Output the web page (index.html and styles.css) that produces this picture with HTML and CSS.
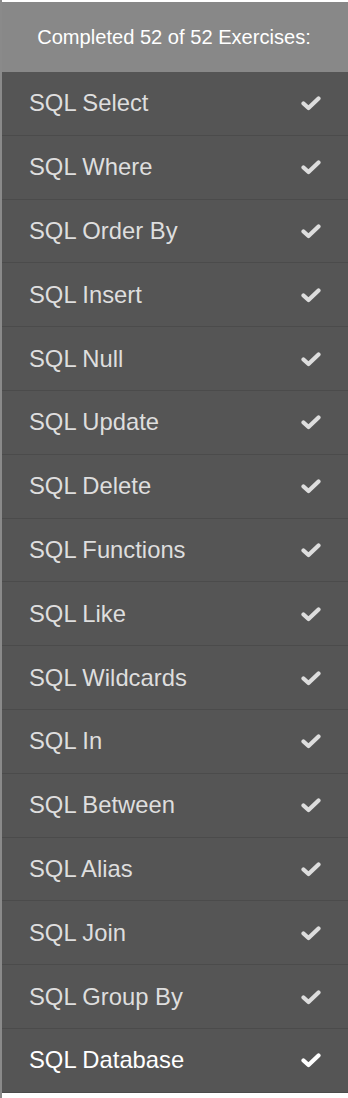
FILE: index.html
```html
<!DOCTYPE html>
<html>
<head>
<meta charset="utf-8">
<link rel="stylesheet" href="styles.css">
</head>
<body>
<div class="panel">
  <div class="header">Completed 52 of 52 Exercises:</div>
  <ul class="list">
    <li class="item"><span>SQL Select</span><svg class="check" viewBox="0 0 20 16"><path d="M2.5 8.5 L7.5 13 L17.5 3.5" /></svg></li>
    <li class="item"><span>SQL Where</span><svg class="check" viewBox="0 0 20 16"><path d="M2.5 8.5 L7.5 13 L17.5 3.5" /></svg></li>
    <li class="item"><span>SQL Order By</span><svg class="check" viewBox="0 0 20 16"><path d="M2.5 8.5 L7.5 13 L17.5 3.5" /></svg></li>
    <li class="item"><span>SQL Insert</span><svg class="check" viewBox="0 0 20 16"><path d="M2.5 8.5 L7.5 13 L17.5 3.5" /></svg></li>
    <li class="item"><span>SQL Null</span><svg class="check" viewBox="0 0 20 16"><path d="M2.5 8.5 L7.5 13 L17.5 3.5" /></svg></li>
    <li class="item"><span>SQL Update</span><svg class="check" viewBox="0 0 20 16"><path d="M2.5 8.5 L7.5 13 L17.5 3.5" /></svg></li>
    <li class="item"><span>SQL Delete</span><svg class="check" viewBox="0 0 20 16"><path d="M2.5 8.5 L7.5 13 L17.5 3.5" /></svg></li>
    <li class="item"><span>SQL Functions</span><svg class="check" viewBox="0 0 20 16"><path d="M2.5 8.5 L7.5 13 L17.5 3.5" /></svg></li>
    <li class="item"><span>SQL Like</span><svg class="check" viewBox="0 0 20 16"><path d="M2.5 8.5 L7.5 13 L17.5 3.5" /></svg></li>
    <li class="item"><span>SQL Wildcards</span><svg class="check" viewBox="0 0 20 16"><path d="M2.5 8.5 L7.5 13 L17.5 3.5" /></svg></li>
    <li class="item"><span>SQL In</span><svg class="check" viewBox="0 0 20 16"><path d="M2.5 8.5 L7.5 13 L17.5 3.5" /></svg></li>
    <li class="item"><span>SQL Between</span><svg class="check" viewBox="0 0 20 16"><path d="M2.5 8.5 L7.5 13 L17.5 3.5" /></svg></li>
    <li class="item"><span>SQL Alias</span><svg class="check" viewBox="0 0 20 16"><path d="M2.5 8.5 L7.5 13 L17.5 3.5" /></svg></li>
    <li class="item"><span>SQL Join</span><svg class="check" viewBox="0 0 20 16"><path d="M2.5 8.5 L7.5 13 L17.5 3.5" /></svg></li>
    <li class="item"><span>SQL Group By</span><svg class="check" viewBox="0 0 20 16"><path d="M2.5 8.5 L7.5 13 L17.5 3.5" /></svg></li>
    <li class="item active"><span>SQL Database</span><svg class="check" viewBox="0 0 20 16"><path d="M2.5 8.5 L7.5 13 L17.5 3.5" /></svg></li>
  </ul>
</div>
</body>
</html>
```
FILE: styles.css
```css
html, body {
  margin: 0;
  padding: 0;
  background: #ffffff;
}
body {
  font-family: "Liberation Sans", Arial, sans-serif;
  border-left: 2px solid #8a8a8a;
  min-height: 1098px;
  box-sizing: border-box;
}
.panel {
  padding-top: 2px;
}
.header {
  background: #888888;
  color: #ffffff;
  font-size: 20.1px;
  height: 70px;
  display: flex;
  align-items: center;
  justify-content: center;
  padding-right: 2px;
}
.list {
  list-style: none;
  margin: 0;
  padding: 0;
}
.item {
  background: #555555;
  color: #dedede;
  font-size: 23.8px;
  height: 62.8px;
  border-bottom: 1px solid #4b4b4b;
  display: flex;
  align-items: center;
  justify-content: space-between;
  padding: 0 27px 0 27px;
}
.item.active {
  color: #ffffff;
}
.check {
  width: 20px;
  height: 16px;
  fill: none;
  stroke: #dddddd;
  stroke-width: 4.2;
  stroke-linecap: round;
  stroke-linejoin: round;
}
.item.active .check {
  stroke: #ffffff;
}
```
